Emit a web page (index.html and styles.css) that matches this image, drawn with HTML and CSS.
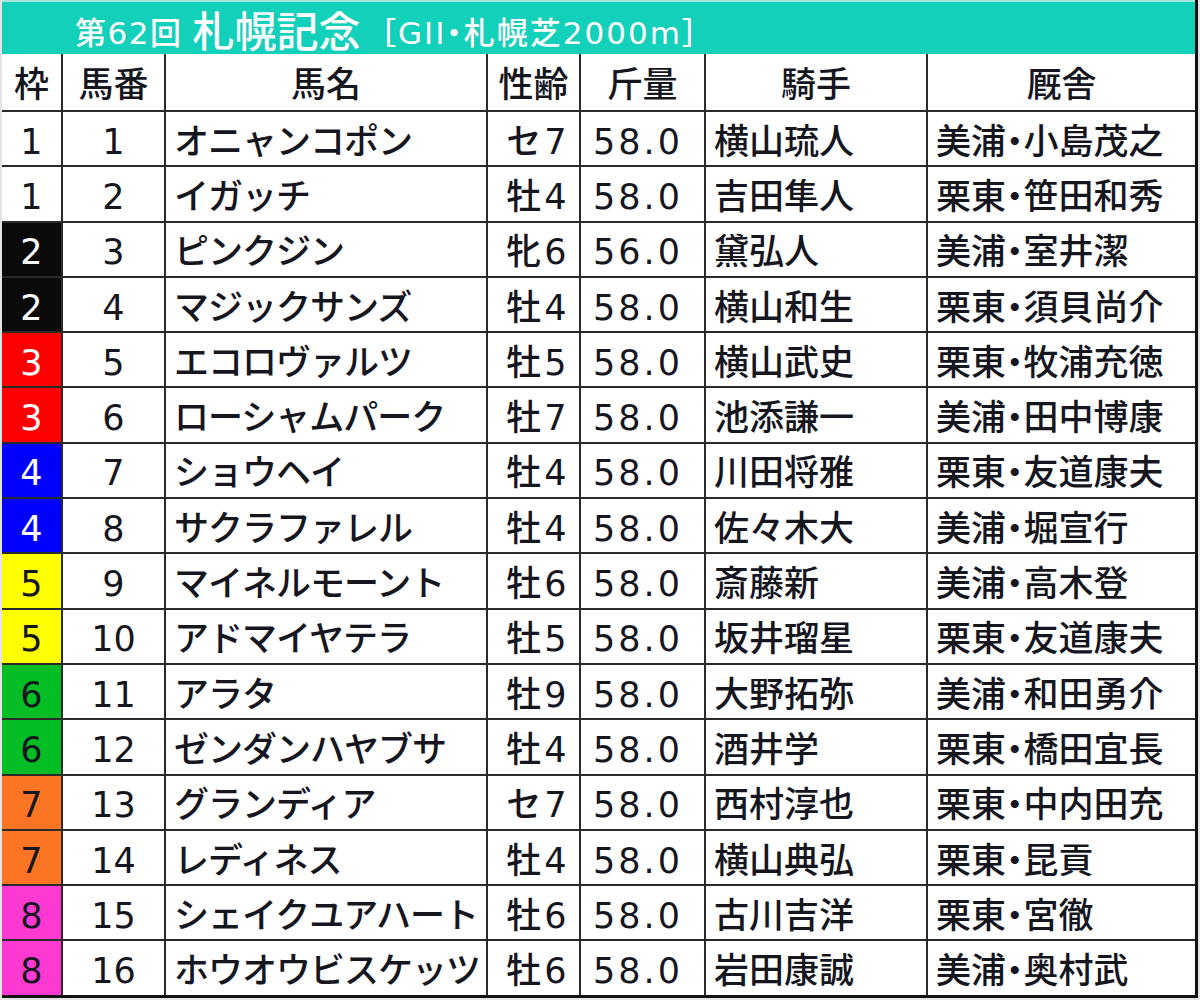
FILE: index.html
```html
<!DOCTYPE html>
<html lang="ja">
<head>
<meta charset="utf-8">
<title>札幌記念</title>
<link rel="stylesheet" href="styles.css">
</head>
<body>
<div class="frame">
  <div class="title">
    <span class="t-small">第62回</span>
    <span class="t-big">札幌記念</span>
    <span class="t-small t-sub">［GII・札幌芝2000m］</span>
  </div>
  <div class="grid">
    <div class="c hd">枠</div><div class="c hd">馬番</div><div class="c hd">馬名</div><div class="c hd">性齢</div><div class="c hd">斤量</div><div class="c hd">騎手</div><div class="c hd">厩舎</div>

    <div class="c w1">1</div><div class="c ctr">1</div><div class="c left nm">オニャンコポン</div><div class="c ctr sx">セ7</div><div class="c ctr num">58.0</div><div class="c left">横山琉人</div><div class="c left">美浦・小島茂之</div>
    <div class="c w1">1</div><div class="c ctr">2</div><div class="c left nm">イガッチ</div><div class="c ctr sx">牡4</div><div class="c ctr num">58.0</div><div class="c left">吉田隼人</div><div class="c left">栗東・笹田和秀</div>
    <div class="c w2">2</div><div class="c ctr">3</div><div class="c left nm">ピンクジン</div><div class="c ctr sx">牝6</div><div class="c ctr num">56.0</div><div class="c left">黛弘人</div><div class="c left">美浦・室井潔</div>
    <div class="c w2">2</div><div class="c ctr">4</div><div class="c left nm">マジックサンズ</div><div class="c ctr sx">牡4</div><div class="c ctr num">58.0</div><div class="c left">横山和生</div><div class="c left">栗東・須貝尚介</div>
    <div class="c w3">3</div><div class="c ctr">5</div><div class="c left nm">エコロヴァルツ</div><div class="c ctr sx">牡5</div><div class="c ctr num">58.0</div><div class="c left">横山武史</div><div class="c left">栗東・牧浦充徳</div>
    <div class="c w3">3</div><div class="c ctr">6</div><div class="c left nm">ローシャムパーク</div><div class="c ctr sx">牡7</div><div class="c ctr num">58.0</div><div class="c left">池添謙一</div><div class="c left">美浦・田中博康</div>
    <div class="c w4">4</div><div class="c ctr">7</div><div class="c left nm">ショウヘイ</div><div class="c ctr sx">牡4</div><div class="c ctr num">58.0</div><div class="c left">川田将雅</div><div class="c left">栗東・友道康夫</div>
    <div class="c w4">4</div><div class="c ctr">8</div><div class="c left nm">サクラファレル</div><div class="c ctr sx">牡4</div><div class="c ctr num">58.0</div><div class="c left">佐々木大</div><div class="c left">美浦・堀宣行</div>
    <div class="c w5">5</div><div class="c ctr">9</div><div class="c left nm">マイネルモーント</div><div class="c ctr sx">牡6</div><div class="c ctr num">58.0</div><div class="c left">斎藤新</div><div class="c left">美浦・高木登</div>
    <div class="c w5">5</div><div class="c ctr">10</div><div class="c left nm">アドマイヤテラ</div><div class="c ctr sx">牡5</div><div class="c ctr num">58.0</div><div class="c left">坂井瑠星</div><div class="c left">栗東・友道康夫</div>
    <div class="c w6">6</div><div class="c ctr">11</div><div class="c left nm">アラタ</div><div class="c ctr sx">牡9</div><div class="c ctr num">58.0</div><div class="c left">大野拓弥</div><div class="c left">美浦・和田勇介</div>
    <div class="c w6">6</div><div class="c ctr">12</div><div class="c left nm">ゼンダンハヤブサ</div><div class="c ctr sx">牡4</div><div class="c ctr num">58.0</div><div class="c left">酒井学</div><div class="c left">栗東・橋田宜長</div>
    <div class="c w7">7</div><div class="c ctr">13</div><div class="c left nm">グランディア</div><div class="c ctr sx">セ7</div><div class="c ctr num">58.0</div><div class="c left">西村淳也</div><div class="c left">栗東・中内田充</div>
    <div class="c w7">7</div><div class="c ctr">14</div><div class="c left nm">レディネス</div><div class="c ctr sx">牡4</div><div class="c ctr num">58.0</div><div class="c left">横山典弘</div><div class="c left">栗東・昆貢</div>
    <div class="c w8">8</div><div class="c ctr">15</div><div class="c left nm">シェイクユアハート</div><div class="c ctr sx">牡6</div><div class="c ctr num">58.0</div><div class="c left">古川吉洋</div><div class="c left">栗東・宮徹</div>
    <div class="c w8">8</div><div class="c ctr">16</div><div class="c left nm">ホウオウビスケッツ</div><div class="c ctr sx">牡6</div><div class="c ctr num">58.0</div><div class="c left">岩田康誠</div><div class="c left">美浦・奥村武</div>
  </div>
</div>
</body>
</html>
```

FILE: styles.css
```css
html, body {
  margin: 0;
  padding: 0;
}
body {
  width: 1200px;
  height: 1000px;
  background: #e4e4e4;
  font-family: "DejaVu Sans", "Noto Sans CJK JP", sans-serif;
  font-weight: 500;
  color: #16161f;
  overflow: hidden;
}
.frame {
  margin-left: 2px;
  width: 1193px;
  border-right: 3px solid #111;
  border-bottom: 3px solid #111;
  background: #fff;
  display: flex;
  flex-direction: column;
}
.title {
  height: 54px;
  border-top: 2px solid #a8e6dd;
  background: #13d0bb;
  color: #fff;
  display: flex;
  align-items: center;
  padding-left: 73px;
  padding-top: 10px;
  box-sizing: border-box;
  white-space: nowrap;
}
.t-small {
  font-size: 31px;
  line-height: 1;
  letter-spacing: 1.5px;
}
.t-big {
  font-size: 42px;
  line-height: 1;
  margin-left: 10px;
}
.t-sub {
  margin-left: 20px;
  letter-spacing: 2px;
  font-feature-settings: "halt";
}
.grid {
  display: grid;
  grid-template-columns: 59px 101px 320px 91px 123px 220px 267px;
  grid-template-rows: 56px repeat(16, 53.3px);
  column-gap: 2px;
  row-gap: 2px;
  background: #2a2a2a;
}
.c {
  background: #fff;
  font-size: 35px;
  line-height: 1;
  display: flex;
  align-items: center;
  white-space: nowrap;
  overflow: hidden;
  padding-top: 7px;
  box-sizing: border-box;
}
.left {
  padding-left: 8px;
  font-feature-settings: "halt";
}
.hd, .ctr, .w1, .w2, .w3, .w4, .w5, .w6, .w7, .w8 {
  justify-content: center;
}
.nm {
  letter-spacing: -1px;
  font-feature-settings: normal;
}
.sx {
  letter-spacing: 3px;
  padding-left: 9px;
}
.num {
  letter-spacing: 3px;
  padding-right: 9px;
}
.w2 { background: #0a0a0a; color: #fff; }
.w3 { background: #ff0000; color: #fff; }
.w4 { background: #0000ff; color: #fff; }
.w5 { background: #ffff00; }
.w6 { background: #05bd24; }
.w7 { background: #fb7524; }
.w8 { background: #fc3ad2; }
```
